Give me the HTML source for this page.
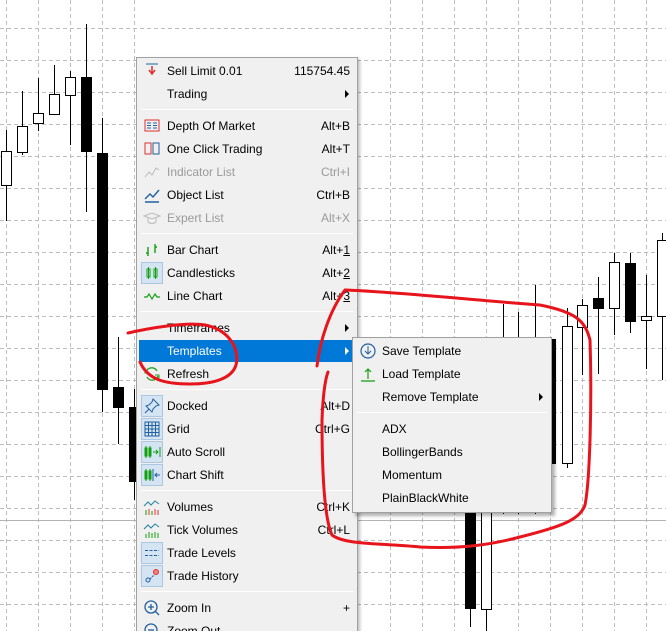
<!DOCTYPE html>
<html style="width:666px;height:631px;overflow:hidden"><head><meta charset="utf-8"><style>
*{margin:0;padding:0;box-sizing:border-box}
body{width:666px;height:631px;overflow:hidden;background:#fff;position:relative;font-family:"Liberation Sans",sans-serif;font-size:12px;color:#000}
.menu{position:absolute;left:136px;top:57px;width:222px;height:580px;background:#f0f0f0;border:1px solid #a0a0a0;box-shadow:2px 2px 3px rgba(0,0,0,.25);overflow:hidden}
.it{position:absolute;left:0;width:220px;height:22px;line-height:22px}
.it .t{position:absolute;left:30px}
.it .k{position:absolute;right:7px}
.dis{color:#9a9a9a}
.sep{position:absolute;left:4px;width:212px;height:1px;background:#c8c8c8;border-bottom:1px solid #fff}
.hl{background:#0078d7;color:#fff}
.arr{position:absolute;right:8px;top:7px;width:0;height:0;border-left:4px solid #000;border-top:4px solid transparent;border-bottom:4px solid transparent}
.ico{position:absolute;left:4px;top:0;width:22px;height:22px}
.chk{background:#d5e4f2;border:1px solid #aac6e0}
.sub{position:absolute;left:352px;top:337px;width:200px;height:176px;background:#f0f0f0;border:1px solid #a0a0a0;box-shadow:3px 3px 3px rgba(0,0,0,.3)}
.sub .it{width:198px}
.sub .it .t{left:29px}
</style></head><body>
<svg width="666" height="631" style="position:absolute;left:0;top:0">
<g stroke="#bdbdbd" stroke-dasharray="4,3" stroke-width="1">
<line x1="6.5" y1="0" x2="6.5" y2="631"/><line x1="38.5" y1="0" x2="38.5" y2="631"/><line x1="70.5" y1="0" x2="70.5" y2="631"/><line x1="102.5" y1="0" x2="102.5" y2="631"/><line x1="134.5" y1="0" x2="134.5" y2="631"/>
<line x1="390.5" y1="0" x2="390.5" y2="631"/><line x1="422.5" y1="0" x2="422.5" y2="631"/><line x1="454.5" y1="0" x2="454.5" y2="631"/><line x1="486.5" y1="0" x2="486.5" y2="631"/><line x1="518.5" y1="0" x2="518.5" y2="631"/><line x1="550.5" y1="0" x2="550.5" y2="631"/><line x1="582.5" y1="0" x2="582.5" y2="631"/><line x1="614.5" y1="0" x2="614.5" y2="631"/><line x1="646.5" y1="0" x2="646.5" y2="631"/>
<line x1="0" y1="28.5" x2="666" y2="28.5"/><line x1="0" y1="60.5" x2="666" y2="60.5"/><line x1="0" y1="92.5" x2="666" y2="92.5"/><line x1="0" y1="124.5" x2="666" y2="124.5"/><line x1="0" y1="156.5" x2="666" y2="156.5"/><line x1="0" y1="188.5" x2="666" y2="188.5"/><line x1="0" y1="220.5" x2="666" y2="220.5"/><line x1="0" y1="252.5" x2="666" y2="252.5"/><line x1="0" y1="284.5" x2="666" y2="284.5"/><line x1="0" y1="316.5" x2="666" y2="316.5"/><line x1="0" y1="348.5" x2="666" y2="348.5"/><line x1="0" y1="380.5" x2="666" y2="380.5"/><line x1="0" y1="412.5" x2="666" y2="412.5"/><line x1="0" y1="444.5" x2="666" y2="444.5"/><line x1="0" y1="476.5" x2="666" y2="476.5"/><line x1="0" y1="508.5" x2="666" y2="508.5"/><line x1="0" y1="540.5" x2="666" y2="540.5"/><line x1="0" y1="572.5" x2="666" y2="572.5"/><line x1="0" y1="604.5" x2="666" y2="604.5"/>
</g>
<line x1="0" y1="520.5" x2="666" y2="520.5" stroke="#b4b4b4"/>
<g stroke="#000" stroke-width="1" fill="#fff">
<line x1="6.5" y1="130" x2="6.5" y2="221"/><rect x="1.5" y="151.5" width="10" height="34"/>
<line x1="22.5" y1="91" x2="22.5" y2="155"/><rect x="17.5" y="126.5" width="10" height="26"/>
<line x1="38.5" y1="78" x2="38.5" y2="131"/><rect x="33.5" y="113.5" width="10" height="10"/>
<line x1="54.5" y1="65" x2="54.5" y2="94"/><rect x="49.5" y="94.5" width="10" height="20"/>
<line x1="70.5" y1="71" x2="70.5" y2="145"/><rect x="65.5" y="77.5" width="10" height="18"/>
<line x1="86.5" y1="24" x2="86.5" y2="212"/><rect x="81.5" y="77.5" width="10" height="74" fill="#000"/>
<line x1="102.5" y1="118" x2="102.5" y2="412"/><rect x="97.5" y="153.5" width="10" height="236" fill="#000"/>
<line x1="118.5" y1="337" x2="118.5" y2="444"/><rect x="113.5" y="387.5" width="10" height="20" fill="#000"/>
<line x1="134.5" y1="389" x2="134.5" y2="500"/><rect x="129.5" y="407.5" width="10" height="74" fill="#000"/>
<line x1="503.5" y1="304" x2="503.5" y2="514"/><line x1="518.5" y1="312" x2="518.5" y2="514"/><line x1="535.5" y1="285" x2="535.5" y2="514"/>
<line x1="470.5" y1="505" x2="470.5" y2="627"/><rect x="465.5" y="510.5" width="10" height="98" fill="#000"/>
<line x1="486.5" y1="505" x2="486.5" y2="631"/><rect x="481.5" y="512.5" width="10" height="97"/>
<rect x="547.5" y="339.5" width="8" height="124" fill="#000"/>
<line x1="567.5" y1="308" x2="567.5" y2="468"/><rect x="562.5" y="326.5" width="10" height="137"/>
<line x1="582.5" y1="299" x2="582.5" y2="375"/><rect x="577.5" y="305.5" width="10" height="22"/>
<line x1="598.5" y1="277" x2="598.5" y2="374"/><rect x="593.5" y="298.5" width="10" height="10" fill="#000"/>
<line x1="614.5" y1="253" x2="614.5" y2="335"/><rect x="609.5" y="262.5" width="10" height="46"/>
<line x1="630.5" y1="253" x2="630.5" y2="333"/><rect x="625.5" y="263.5" width="10" height="58" fill="#000"/>
<line x1="646.5" y1="275" x2="646.5" y2="369"/><rect x="641.5" y="316.5" width="10" height="4"/>
<line x1="662.5" y1="233" x2="662.5" y2="380"/><rect x="657.5" y="240.5" width="10" height="76"/>
</g>
</svg>

<div class="menu">
<div class="it" style="top:2px"><svg class="ico" viewBox="0 0 22 22"><line x1="5" y1="4" x2="17" y2="4" stroke="#2060a0"/><path d="M11 6v7M8 10l3 4 3-4" stroke="#e03030" fill="none" stroke-width="1.5"/></svg><span class="t">Sell Limit 0.01</span><span class="k">115754.45</span></div>
<div class="it" style="top:25px"><span class="t">Trading</span><span class="arr"></span></div>
<div class="sep" style="top:51px"></div>
<div class="it" style="top:57px"><svg class="ico" viewBox="0 0 22 22"><rect x="4" y="5" width="14" height="11" fill="none" stroke="#e03030"/><path d="M6 8h4M6 10.5h4M6 13h4M12 8h4M12 10.5h4M12 13h4" stroke="#2060a0"/></svg><span class="t">Depth Of Market</span><span class="k">Alt+B</span></div>
<div class="it" style="top:80px"><svg class="ico" viewBox="0 0 22 22"><rect x="4" y="5" width="6" height="11" fill="none" stroke="#e03030"/><rect x="12" y="5" width="6" height="11" fill="none" stroke="#2060a0"/></svg><span class="t">One Click Trading</span><span class="k">Alt+T</span></div>
<div class="it dis" style="top:103px"><svg class="ico" viewBox="0 0 22 22"><path d="M4 16l4-5 3 3 4-7 3 2" stroke="#bbb" fill="none"/></svg><span class="t">Indicator List</span><span class="k">Ctrl+I</span></div>
<div class="it" style="top:126px"><svg class="ico" viewBox="0 0 22 22"><path d="M4 15l5-5 3 3 6-7M4 18h14" stroke="#2060a0" fill="none" stroke-width="1.4"/></svg><span class="t">Object List</span><span class="k">Ctrl+B</span></div>
<div class="it dis" style="top:149px"><svg class="ico" viewBox="0 0 22 22"><path d="M3 9l8-3 8 3-8 3zM7 11v4c2 2 6 2 8 0v-4" stroke="#bbb" fill="none"/></svg><span class="t">Expert List</span><span class="k">Alt+X</span></div>
<div class="sep" style="top:175px"></div>
<div class="it" style="top:181px"><svg class="ico" viewBox="0 0 22 22"><path d="M7 8v9M5 14h2M14 5v9M14 8h2" stroke="#10a010" fill="none" stroke-width="1.4"/></svg><span class="t">Bar Chart</span><span class="k">Alt+<u>1</u></span></div>
<div class="it" style="top:204px"><div class="ico chk"></div><svg class="ico" viewBox="0 0 22 22"><rect x="6" y="7" width="3" height="8" fill="none" stroke="#10a010"/><rect x="13" y="7" width="3" height="8" fill="none" stroke="#10a010"/><path d="M7.5 5v12M14.5 5v12" stroke="#10a010"/></svg><span class="t">Candlesticks</span><span class="k">Alt+<u>2</u></span></div>
<div class="it" style="top:227px"><svg class="ico" viewBox="0 0 22 22"><path d="M3 12h3l2-3 3 5 3-5 2 3h3" stroke="#10a010" fill="none" stroke-width="1.2"/></svg><span class="t">Line Chart</span><span class="k">Alt+<u>3</u></span></div>
<div class="sep" style="top:253px"></div>
<div class="it" style="top:259px"><span class="t">Timeframes</span><span class="arr"></span></div>
<div class="it hl" style="top:282px;left:2px;width:216px"><span class="t" style="left:28px">Templates</span><span class="arr" style="border-left-color:#fff;right:6px"></span></div>
<div class="it" style="top:305px"><svg class="ico" viewBox="0 0 22 22"><path d="M5 9a6 6 0 0 1 11-1M17 13a6 6 0 0 1-11 1" stroke="#20a020" fill="none" stroke-width="1.3"/><path d="M4 6v4h4M18 16v-4h-4" stroke="#20a020" fill="none"/></svg><span class="t">Refresh</span></div>
<div class="sep" style="top:331px"></div>
<div class="it" style="top:337px"><div class="ico chk"></div><svg class="ico" viewBox="0 0 22 22"><path d="M12 4l6 6-3 1-3 3-1 3-6-6 3-1 3-3zM8 14l-4 4" stroke="#2060a0" fill="none"/></svg><span class="t">Docked</span><span class="k">Alt+D</span></div>
<div class="it" style="top:360px"><div class="ico chk"></div><svg class="ico" viewBox="0 0 22 22"><path d="M4 4h14v14H4zM4 7.5h14M4 11h14M4 14.5h14M7.5 4v14M11 4v14M14.5 4v14" stroke="#2060a0" fill="none"/></svg><span class="t">Grid</span><span class="k">Ctrl+G</span></div>
<div class="it" style="top:383px"><div class="ico chk"></div><svg class="ico" viewBox="0 0 22 22"><path d="M4 7h2v8H4zM8 7h2v8H8zM5 5v12M9 5v12M12 11h5M15 9l2 2-2 2M19 6v10" stroke="#10a010" fill="none"/></svg><span class="t">Auto Scroll</span></div>
<div class="it" style="top:406px"><div class="ico chk"></div><svg class="ico" viewBox="0 0 22 22"><path d="M4 7h2v8H4zM8 7h2v8H8zM5 5v12M9 5v12" stroke="#10a010" fill="none"/><path d="M12 5v12M14 11h5M16 9l-2 2 2 2" stroke="#2060a0" fill="none"/></svg><span class="t">Chart Shift</span></div>
<div class="sep" style="top:432px"></div>
<div class="it" style="top:438px"><svg class="ico" viewBox="0 0 22 22"><path d="M3 10l4-4 3 3 4-4 4 3" stroke="#2080a0" fill="none"/><path d="M5 19v-5M8 19v-6M11 19v-4M14 19v-6M17 19v-5" stroke="#e03030"/><path d="M5 19v-5M11 19v-4" stroke="#10a010"/></svg><span class="t">Volumes</span><span class="k">Ctrl+K</span></div>
<div class="it" style="top:461px"><svg class="ico" viewBox="0 0 22 22"><path d="M3 10l4-4 3 3 4-4 4 3" stroke="#2080a0" fill="none"/><path d="M5 19v-4M8 19v-6M11 19v-5M14 19v-6M17 19v-5" stroke="#10a010"/></svg><span class="t">Tick Volumes</span><span class="k">Ctrl+L</span></div>
<div class="it" style="top:484px"><div class="ico chk"></div><svg class="ico" viewBox="0 0 22 22"><path d="M4 8.5h14M4 13.5h14" stroke="#2060a0" stroke-dasharray="3,1.5"/></svg><span class="t">Trade Levels</span></div>
<div class="it" style="top:507px"><div class="ico chk"></div><svg class="ico" viewBox="0 0 22 22"><circle cx="7" cy="15" r="2" fill="none" stroke="#2060a0"/><circle cx="15" cy="7" r="2.5" fill="#f08080" stroke="#e03030"/><path d="M9 14l4-4" stroke="#2060a0" stroke-dasharray="2,1"/></svg><span class="t">Trade History</span></div>
<div class="sep" style="top:533px"></div>
<div class="it" style="top:539px"><svg class="ico" viewBox="0 0 22 22"><circle cx="10" cy="10" r="6" fill="none" stroke="#2060a0" stroke-width="1.3"/><path d="M7 10h6M10 7v6M14 14l4 4" stroke="#2060a0" stroke-width="1.3"/></svg><span class="t">Zoom In</span><span class="k">+</span></div>
<div class="it" style="top:562px"><svg class="ico" viewBox="0 0 22 22"><circle cx="10" cy="10" r="6" fill="none" stroke="#2060a0" stroke-width="1.3"/><path d="M7 10h6" stroke="#2060a0" stroke-width="1.3"/></svg><span class="t">Zoom Out</span></div>
</div>

<div class="sub">
<div class="it" style="top:2px"><svg class="ico" viewBox="0 0 22 22"><circle cx="11" cy="11" r="7" fill="none" stroke="#2060a0" stroke-width="1.2"/><path d="M11 6v8M8 11l3 3 3-3" stroke="#2060a0" fill="none"/></svg><span class="t">Save Template</span></div>
<div class="it" style="top:25px"><svg class="ico" viewBox="0 0 22 22"><path d="M11 16V6M8 9l3-3 3 3M4 18h14" stroke="#10a010" fill="none" stroke-width="1.2"/></svg><span class="t">Load Template</span></div>
<div class="it" style="top:48px"><span class="t">Remove Template</span><span class="arr"></span></div>
<div class="sep" style="top:74px;width:190px"></div>
<div class="it" style="top:80px"><span class="t">ADX</span></div>
<div class="it" style="top:103px"><span class="t">BollingerBands</span></div>
<div class="it" style="top:126px"><span class="t">Momentum</span></div>
<div class="it" style="top:149px"><span class="t">PlainBlackWhite</span></div>
</div>

<svg width="666" height="631" style="position:absolute;left:0;top:0" fill="none" stroke="#e8141c" stroke-width="3" stroke-linecap="round">
<path d="M128 333 C150 328 185 322 205 325 C230 330 240 350 236 365 C232 378 215 384 190 384 C165 384 148 380 140 362"/>
<path d="M317 366 C320 340 330 310 345 290 C400 292 470 300 540 305 C575 312 585 320 590 340 C592 400 590 480 585 505 C580 520 560 527 520 537 C490 545 460 549 420 547 C380 543 345 545 332 535 C325 520 322 480 322 420 C323 395 325 380 328 372"/>
</svg>
</body></html>
